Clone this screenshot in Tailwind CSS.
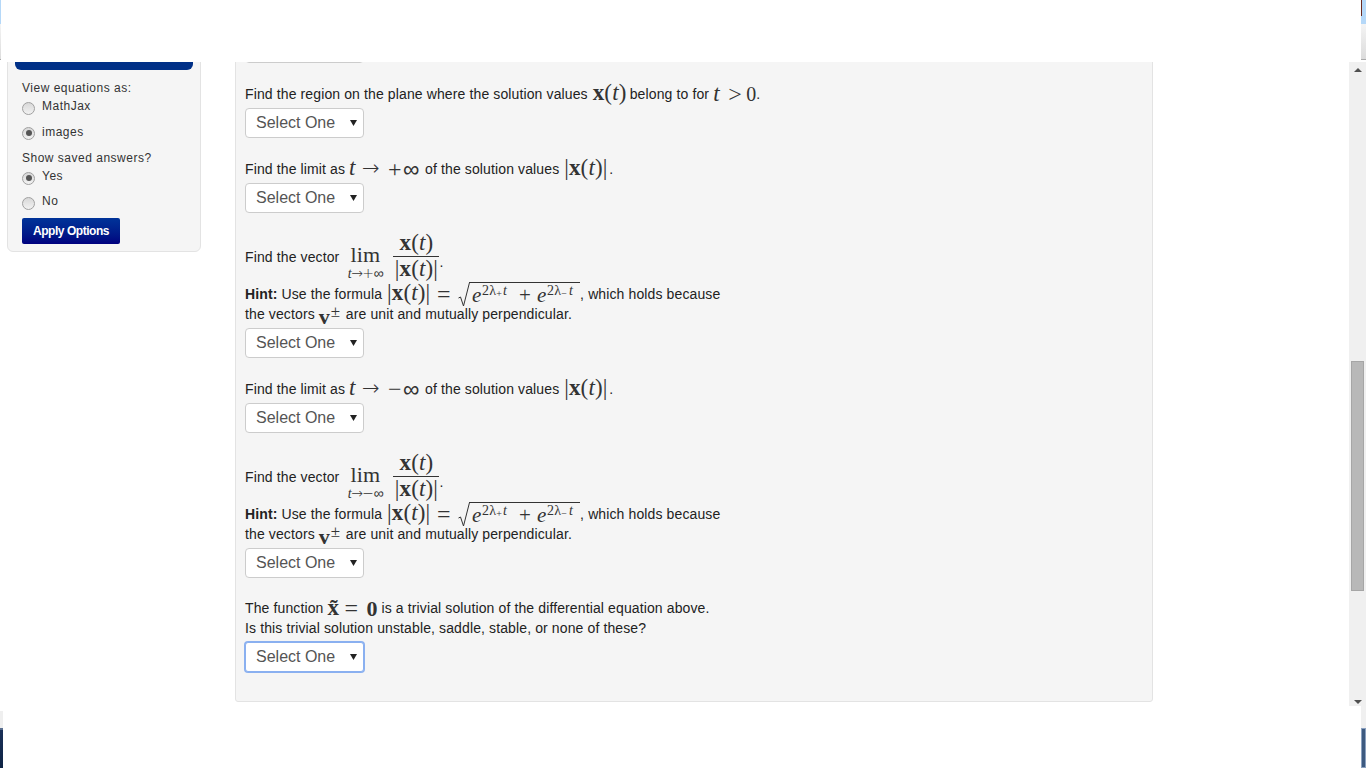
<!DOCTYPE html>
<html><head><meta charset="utf-8"><script src="https://cdn.jsdelivr.net/npm/@tailwindcss/browser@4"></script></head>
<body class="m-0">
<div class="w-[1366px] h-[768px] flex flex-col overflow-hidden bg-white font-['Liberation_Sans',Arial,sans-serif] text-[#333]">
  <!-- top strip -->
  <div class="h-[62px] flex shrink-0">
    <div class="w-px flex flex-col"><div class="h-6 bg-[#b5d8f8]"></div><div class="h-9 bg-gradient-to-b from-[#f4f4f4] to-[#dcdcdc] border-b border-[#aaa]"></div></div>
    <div class="w-[1360px]"></div>
    <div class="w-[5px] flex flex-col"><div class="h-6 bg-[#b5d8f8]"><div class="w-[1px] h-4 bg-[#6b2a20]"></div></div><div class="h-9 bg-gradient-to-b from-[#f4f4f4] to-[#dcdcdc] border-b border-[#aaa]"></div></div>
  </div>
  <!-- middle -->
  <div class="h-[644px] flex shrink-0">
    <div class="w-[1349px] overflow-hidden">
      <div class="flex items-start -mt-[32px] pl-[7px]">
        <!-- sidebar -->
        <aside class="w-[194px] h-[222px] shrink-0 bg-[#f5f5f5] border border-[#e3e3e3] rounded-[6px] pt-[9px] px-[7px] text-[12px] leading-4 text-[#333]">
          <div class="h-[30px] w-[178px] bg-[#003087] rounded-[6px]"></div>
          <div class="pl-[7px] tracking-[0.5px]">
            <div class="mt-[10px] h-4">View equations as:</div>
            <div class="mt-[2px] h-4 flex items-center gap-[7px]"><span class="w-[13px] h-[13px] mt-[4px] rounded-full border border-[#a0a0a0] bg-gradient-to-b from-[#d8d8d8] to-[#f2f2f2]"></span><span class="-mt-[1px]">MathJax</span></div>
            <div class="mt-[10px] h-4 flex items-center gap-[7px]"><span class="w-[13px] h-[13px] mt-[2px] rounded-full border border-[#a0a0a0] bg-gradient-to-b from-[#d8d8d8] to-[#f2f2f2] flex items-center justify-center"><span class="w-[6px] h-[6px] rounded-full bg-[#555]"></span></span><span>images</span></div>
            <div class="mt-[10px] h-4">Show saved answers?</div>
            <div class="mt-[2px] h-4 flex items-center gap-[7px]"><span class="w-[13px] h-[13px] mt-[4px] rounded-full border border-[#a0a0a0] bg-gradient-to-b from-[#d8d8d8] to-[#f2f2f2] flex items-center justify-center"><span class="w-[6px] h-[6px] rounded-full bg-[#555]"></span></span><span class="-mt-[1px]">Yes</span></div>
            <div class="mt-[9px] h-4 flex items-center gap-[7px]"><span class="w-[13px] h-[13px] mt-[4px] rounded-full border border-[#a0a0a0] bg-gradient-to-b from-[#d8d8d8] to-[#f2f2f2]"></span><span>No</span></div>
            <div class="mt-[9px] w-[98px] h-[26px] rounded-[2px] bg-gradient-to-b from-[#003399] to-[#00007f] text-white font-bold tracking-[-0.45px] flex items-center justify-center">Apply Options</div>
          </div>
        </aside>
        <!-- panel -->
        <main class="ml-[34px] w-[918px] h-[672px] shrink-0 bg-[#f5f5f5] border border-[#e3e3e3] rounded-[3px] pl-[9px] text-[14px] tracking-[0.12px] text-[#222]">
          <div class="mt-[2px] w-[119px] h-[30px] border border-[#ccc] rounded bg-white"></div>

          <div class="mt-[21px] h-5 flex items-center whitespace-nowrap">Find the region on the plane where the solution values<span class="ml-[5px] w-[34px] -mt-[2px] font-['Liberation_Serif',serif] text-[23px] text-[#333]"><b>x</b>(<i>t</i>)</span><span class="ml-[3px]">belong to for</span><span class="ml-[4px] w-[8px] font-['Liberation_Serif',serif] text-[23px] text-[#333]"><i>t</i></span><span class="ml-[7px] w-[14px] font-['Liberation_Serif',serif] text-[24px] text-[#333]">&gt;</span><span class="ml-[4px] w-[10px] font-['Liberation_Serif',serif] text-[20px] text-[#333]">0</span><span>.</span></div>
          <div class="mt-[4px] w-[119px] h-[30px] border border-[#ccc] rounded bg-white flex items-center justify-between pl-[10px] pr-[6px] text-[16px] tracking-normal text-[#555]">Select One<svg width="7" height="6" viewBox="0 0 7 6"><path d="M0 0h7L3.5 6z" fill="#222"/></svg></div>

          <div class="mt-[21px] h-5 flex items-center whitespace-nowrap">Find the limit as<span class="ml-[4px] w-[8px] -mt-[1px] font-['Liberation_Serif',serif] text-[23px] text-[#333]"><i>t</i></span><span class="ml-[5px] w-[20px] font-['DejaVu_Sans',sans-serif] font-extralight text-[21px] text-[#333]">→</span><span class="ml-[6px] w-[14px] font-['Liberation_Serif',serif] text-[24px] text-[#333]">+</span><span class="ml-[1px] w-[18px] font-['DejaVu_Sans',sans-serif] font-extralight text-[23px] text-[#333]">∞</span><span class="ml-[4px]">of the solution values</span><span class="ml-[5px] w-[45px] -mt-[2px] font-['Liberation_Serif',serif] text-[23px] text-[#333]">|<b>x</b>(<i>t</i>)|</span><span>.</span></div>
          <div class="mt-[4px] w-[119px] h-[30px] border border-[#ccc] rounded bg-white flex items-center justify-between pl-[10px] pr-[6px] text-[16px] tracking-normal text-[#555]">Select One<svg width="7" height="6" viewBox="0 0 7 6"><path d="M0 0h7L3.5 6z" fill="#222"/></svg></div>

          <div class="mt-[19px] h-[50px] flex items-center whitespace-nowrap">Find the vector
            <span class="ml-[4px] w-[44px] flex flex-col items-center font-['Liberation_Serif',serif] text-[#333]"><span class="text-[22px] leading-[22px] mt-[10px]">lim</span><span class="text-[14px] leading-[14px] font-['DejaVu_Sans',sans-serif] font-extralight tracking-[-0.5px]"><i class="font-['Liberation_Serif',serif]">t</i>→+∞</span></span>
            <span class="ml-[6px] w-[46px] flex flex-col items-center font-['Liberation_Serif',serif] text-[23px] text-[#333]"><span class="border-b border-[#333] w-full text-center h-[25px] leading-[21px] -mt-[1px]"><b>x</b>(<i>t</i>)</span><span class="h-[25px] leading-[23px]">|<b>x</b>(<i>t</i>)|</span></span><span class="mt-[10px]">.</span>
          </div>
          <div class="mt-[2px] h-5 flex items-center whitespace-nowrap"><b>Hint:</b><span class="ml-[4px]">Use the formula</span><span class="ml-[5px] w-[45px] -mt-[2px] font-['Liberation_Serif',serif] text-[23px] text-[#333]">|<b>x</b>(<i>t</i>)|</span><span class="ml-[5px] w-[14px] font-['Liberation_Serif',serif] text-[24px] text-[#333]">=</span>
            <svg class="ml-[7px]" width="12" height="25" viewBox="0 0 12 25"><path d="M0.5 16 L2.5 15 L5.5 24 L11.5 0.5" fill="none" stroke="#333" stroke-width="1"/></svg>
            <span class="-ml-[1px] border-t border-[#333] h-[25px] w-[111px] flex font-['Liberation_Serif',serif] text-[21px] leading-[24px] text-[#333]"><i class="ml-[3px] w-[10px]">e</i><span class="w-[31px] text-[14px] leading-[16px] flex">2λ<span class="text-[10px] mt-[3px]">+</span><i class="ml-[1px]">t</i></span><span class="ml-[6px] w-[13px]">+</span><i class="ml-[5px] w-[10px]">e</i><span class="w-[31px] text-[14px] leading-[16px] flex">2λ<span class="text-[10px] mt-[3px]">−</span><i class="ml-[2px]">t</i></span></span><span>, which holds because</span></div>
          <div class="h-5 flex items-center whitespace-nowrap">the vectors<span class="ml-[4px] w-[12px] font-['Liberation_Serif',serif] text-[22px] font-bold mt-[4px] text-[#333]">v</span><span class="w-[11px] font-['Liberation_Serif',serif] text-[17px] -mt-[5px] text-[#333]">±</span><span class="ml-[4px]">are unit and mutually perpendicular.</span></div>
          <div class="mt-[4px] w-[119px] h-[30px] border border-[#ccc] rounded bg-white flex items-center justify-between pl-[10px] pr-[6px] text-[16px] tracking-normal text-[#555]">Select One<svg width="7" height="6" viewBox="0 0 7 6"><path d="M0 0h7L3.5 6z" fill="#222"/></svg></div>

          <div class="mt-[21px] h-5 flex items-center whitespace-nowrap">Find the limit as<span class="ml-[4px] w-[8px] -mt-[1px] font-['Liberation_Serif',serif] text-[23px] text-[#333]"><i>t</i></span><span class="ml-[5px] w-[20px] font-['DejaVu_Sans',sans-serif] font-extralight text-[21px] text-[#333]">→</span><span class="ml-[6px] w-[14px] font-['Liberation_Serif',serif] text-[24px] text-[#333]">−</span><span class="ml-[1px] w-[18px] font-['DejaVu_Sans',sans-serif] font-extralight text-[23px] text-[#333]">∞</span><span class="ml-[4px]">of the solution values</span><span class="ml-[5px] w-[45px] -mt-[2px] font-['Liberation_Serif',serif] text-[23px] text-[#333]">|<b>x</b>(<i>t</i>)|</span><span>.</span></div>
          <div class="mt-[4px] w-[119px] h-[30px] border border-[#ccc] rounded bg-white flex items-center justify-between pl-[10px] pr-[6px] text-[16px] tracking-normal text-[#555]">Select One<svg width="7" height="6" viewBox="0 0 7 6"><path d="M0 0h7L3.5 6z" fill="#222"/></svg></div>

          <div class="mt-[19px] h-[50px] flex items-center whitespace-nowrap">Find the vector
            <span class="ml-[4px] w-[44px] flex flex-col items-center font-['Liberation_Serif',serif] text-[#333]"><span class="text-[22px] leading-[22px] mt-[10px]">lim</span><span class="text-[14px] leading-[14px] font-['DejaVu_Sans',sans-serif] font-extralight tracking-[-0.5px]"><i class="font-['Liberation_Serif',serif]">t</i>→−∞</span></span>
            <span class="ml-[6px] w-[46px] flex flex-col items-center font-['Liberation_Serif',serif] text-[23px] text-[#333]"><span class="border-b border-[#333] w-full text-center h-[25px] leading-[21px] -mt-[1px]"><b>x</b>(<i>t</i>)</span><span class="h-[25px] leading-[23px]">|<b>x</b>(<i>t</i>)|</span></span><span class="mt-[10px]">.</span>
          </div>
          <div class="mt-[2px] h-5 flex items-center whitespace-nowrap"><b>Hint:</b><span class="ml-[4px]">Use the formula</span><span class="ml-[5px] w-[45px] -mt-[2px] font-['Liberation_Serif',serif] text-[23px] text-[#333]">|<b>x</b>(<i>t</i>)|</span><span class="ml-[5px] w-[14px] font-['Liberation_Serif',serif] text-[24px] text-[#333]">=</span>
            <svg class="ml-[7px]" width="12" height="25" viewBox="0 0 12 25"><path d="M0.5 16 L2.5 15 L5.5 24 L11.5 0.5" fill="none" stroke="#333" stroke-width="1"/></svg>
            <span class="-ml-[1px] border-t border-[#333] h-[25px] w-[111px] flex font-['Liberation_Serif',serif] text-[21px] leading-[24px] text-[#333]"><i class="ml-[3px] w-[10px]">e</i><span class="w-[31px] text-[14px] leading-[16px] flex">2λ<span class="text-[10px] mt-[3px]">+</span><i class="ml-[1px]">t</i></span><span class="ml-[6px] w-[13px]">+</span><i class="ml-[5px] w-[10px]">e</i><span class="w-[31px] text-[14px] leading-[16px] flex">2λ<span class="text-[10px] mt-[3px]">−</span><i class="ml-[2px]">t</i></span></span><span>, which holds because</span></div>
          <div class="h-5 flex items-center whitespace-nowrap">the vectors<span class="ml-[4px] w-[12px] font-['Liberation_Serif',serif] text-[22px] font-bold mt-[4px] text-[#333]">v</span><span class="w-[11px] font-['Liberation_Serif',serif] text-[17px] -mt-[5px] text-[#333]">±</span><span class="ml-[4px]">are unit and mutually perpendicular.</span></div>
          <div class="mt-[4px] w-[119px] h-[30px] border border-[#ccc] rounded bg-white flex items-center justify-between pl-[10px] pr-[6px] text-[16px] tracking-normal text-[#555]">Select One<svg width="7" height="6" viewBox="0 0 7 6"><path d="M0 0h7L3.5 6z" fill="#222"/></svg></div>

          <div class="mt-[20px] h-5 flex items-center whitespace-nowrap">The function<span class="ml-[4px] w-[12px] font-['Liberation_Serif',serif] text-[23px] font-bold text-[#333]">x̃</span><span class="ml-[5px] w-[14px] font-['Liberation_Serif',serif] text-[24px] text-[#333]">=</span><span class="ml-[8px] w-[11px] font-['Liberation_Serif',serif] text-[22px] font-bold text-[#333]">0</span><span class="ml-[4px]">is a trivial solution of the differential equation above.</span></div>
          <div class="h-5 flex items-center whitespace-nowrap">Is this trivial solution unstable, saddle, stable, or none of these?</div>
          <div class="mt-[4px] w-[119px] h-[30px] border border-[#8ab0f0] rounded-[3px] ring-1 ring-[#8ab0f0] bg-white flex items-center justify-between pl-[10px] pr-[6px] text-[16px] tracking-normal text-[#555]">Select One<svg width="7" height="6" viewBox="0 0 7 6"><path d="M0 0h7L3.5 6z" fill="#222"/></svg></div>
        </main>
      </div>
    </div>
    <!-- scrollbar -->
    <div class="w-[17px] bg-[#f0f0f0] flex flex-col items-center">
      <svg class="mt-[6px]" width="8" height="4" viewBox="0 0 8 4"><path d="M4 0L8 4H0z" fill="#505050"/></svg>
      <div class="mt-[289px] w-[13px] h-[230px] bg-[#b8b8b8] border border-[#a6a6a6]"></div>
      <svg class="mt-[109px]" width="8" height="4" viewBox="0 0 8 4"><path d="M0 0h8L4 4z" fill="#505050"/></svg>
    </div>
  </div>
  <!-- bottom strip -->
  <div class="h-[62px] flex shrink-0">
    <div class="w-[3px] flex flex-col"><div class="h-[5px]"></div><div class="h-[17px] bg-[#efefef]"></div><div class="flex-1 bg-gradient-to-b from-[#1a3058] to-[#0e2444] border-t-2 border-[#5a6f90]"></div></div>
    <div class="w-[1358px]"></div>
    <div class="w-[5px] flex flex-col"><div class="h-[22px] bg-[#f0f0f0]"></div><div class="flex-1 bg-[#3d5a80] border border-[#8aa0bf]"></div></div>
  </div>
</div>
</body></html>
